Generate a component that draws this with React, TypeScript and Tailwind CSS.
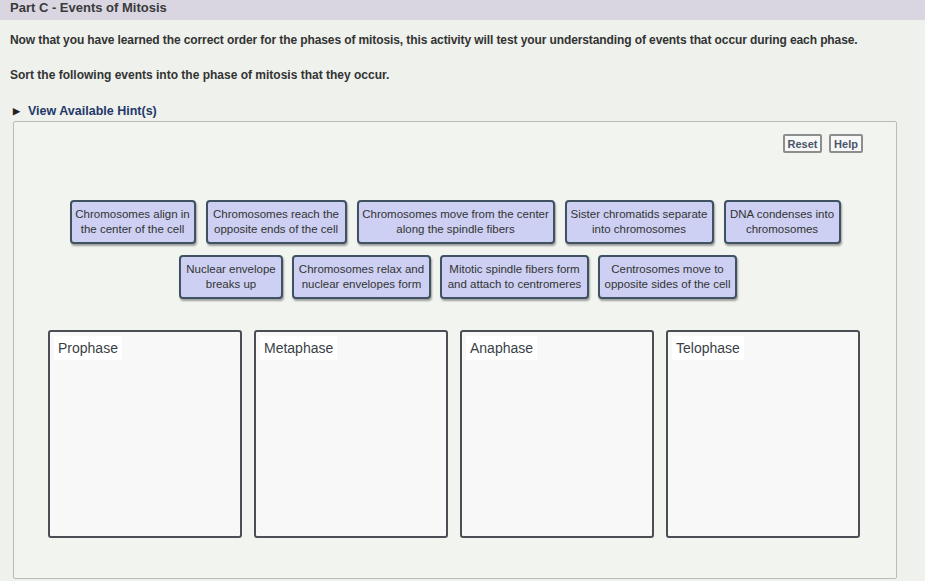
import React from 'react';

const rowOne = [
  { text: ['Chromosomes align in', 'the center of the cell'], w: 'w-[126px]' },
  { text: ['Chromosomes reach the', 'opposite ends of the cell'], w: 'w-[141px]' },
  { text: ['Chromosomes move from the center', 'along the spindle fibers'], w: 'w-[198px]' },
  { text: ['Sister chromatids separate', 'into chromosomes'], w: 'w-[149px]' },
  { text: ['DNA condenses into', 'chromosomes'], w: 'w-[117px]' },
];

const rowTwo = [
  { text: ['Nuclear envelope', 'breaks up'], w: 'w-[104px]' },
  { text: ['Chromosomes relax and', 'nuclear envelopes form'], w: 'w-[139px]' },
  { text: ['Mitotic spindle fibers form', 'and attach to centromeres'], w: 'w-[149px]' },
  { text: ['Centrosomes move to', 'opposite sides of the cell'], w: 'w-[139px]' },
];

const phases = ['Prophase', 'Metaphase', 'Anaphase', 'Telophase'];

const EventCard = ({ text, w }: { text: string[]; w: string }) => (
  <div
    className={`${w} h-[44px] flex flex-col items-center justify-center rounded-[4px] border-2 border-[#3f5262] bg-[#cdd0f2] text-[11.5px] leading-[15px] text-[#333] shadow-[1px_2px_2px_rgba(0,0,0,0.35)]`}
  >
    {text.map((line, i) => (
      <span key={i} className="whitespace-nowrap">
        {line}
      </span>
    ))}
  </div>
);

export default function App() {
  return (
    <div className="w-[925px] h-[581px] overflow-hidden bg-[#eef1ec] font-['Liberation_Sans',Arial,sans-serif] text-[#333]">
      <div className="h-[20px] bg-[#d9d6e2] px-[10px]">
        <h1 className="text-[13px] font-bold leading-[15px] text-[#3a3a3a]">Part C - Events of Mitosis</h1>
      </div>

      <div className="px-[10px] pt-[12px]">
        <p className="whitespace-nowrap text-[12px] font-bold leading-[16px] tracking-[-0.1px] text-[#333]">
          Now that you have learned the correct order for the phases of mitosis, this activity will test your understanding of events that occur during each phase.
        </p>
        <p className="mt-[19px] text-[12px] font-bold leading-[16px] text-[#333]">
          Sort the following events into the phase of mitosis that they occur.
        </p>
        <div className="mt-[20px] flex items-center gap-[8px] pl-[3px] text-[12.5px] font-bold leading-[16px] text-[#25386a]">
          <span className="text-[9px] text-[#222]">▶</span>
          <span>View Available Hint(s)</span>
        </div>
      </div>

      <div className="ml-[13px] mr-[28px] mt-[2px] h-[458px] rounded-[2px] border border-[#b9bcb8] bg-[#f2f4f0]">
        <div className="flex justify-end gap-[7px] pt-[12px] pr-[33px]">
          <button className="h-[19px] w-[39px] rounded-[2px] border-2 border-[#8d8d8d] bg-[#f7f7f7] text-[11px] font-bold text-[#4a5568]">
            Reset
          </button>
          <button className="h-[19px] w-[34px] rounded-[2px] border-2 border-[#8d8d8d] bg-[#f7f7f7] text-[11px] font-bold text-[#4a5568]">
            Help
          </button>
        </div>

        <div className="mt-[47px] flex flex-col items-center gap-[11px]">
          <div className="flex gap-[10px]">
            {rowOne.map((c, i) => (
              <EventCard key={i} text={c.text} w={c.w} />
            ))}
          </div>
          <div className="flex gap-[9px] pl-[6px]">
            {rowTwo.map((c, i) => (
              <EventCard key={i} text={c.text} w={c.w} />
            ))}
          </div>
        </div>

        <div className="mt-[31px] flex justify-center gap-[12px] pr-[2px]">
          {phases.map(p => (
            <div key={p} className="h-[208px] w-[194px] rounded-[3px] border-2 border-[#4b4f55] bg-[#f7f8f7]">
              <div className="ml-[4px] mt-[4px] inline-block bg-white px-[4px] py-[3px] text-[14px] leading-[18px] text-[#3a3f47]">
                {p}
              </div>
            </div>
          ))}
        </div>
      </div>
    </div>
  );
}
